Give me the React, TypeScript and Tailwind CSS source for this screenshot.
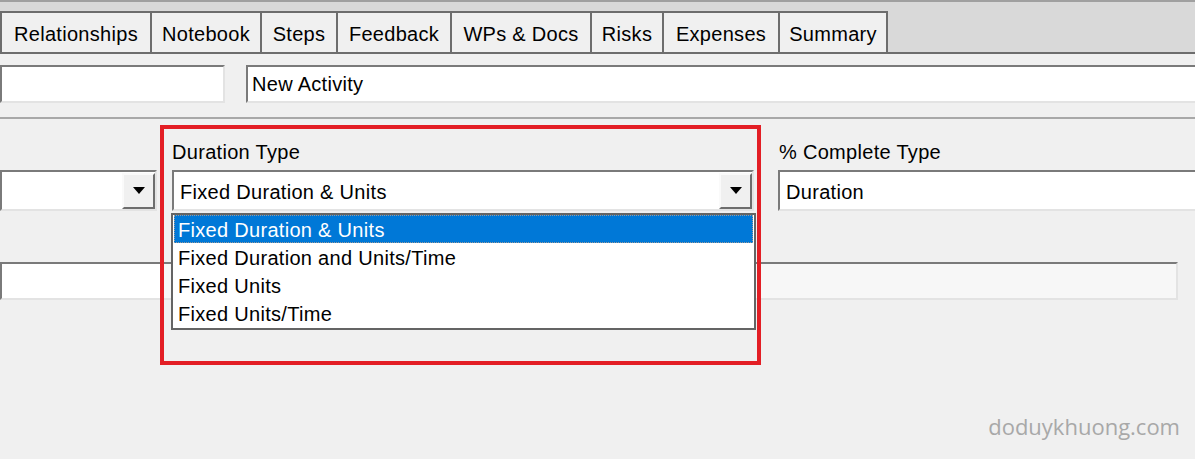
import type { ReactNode } from "react"

const tabs = [
  { label: "Relationships", w: "w-[150px]" },
  { label: "Notebook", w: "w-[110px]" },
  { label: "Steps", w: "w-[76px]" },
  { label: "Feedback", w: "w-[114px]" },
  { label: "WPs & Docs", w: "w-[140px]" },
  { label: "Risks", w: "w-[72px]" },
  { label: "Expenses", w: "w-[116px]" },
  { label: "Summary", w: "w-[110px] border-r-2" }
]

const options = [
  "Fixed Duration & Units",
  "Fixed Duration and Units/Time",
  "Fixed Units",
  "Fixed Units/Time"
]

// sunken win32 edit look
const sunken =
  "border-2 border-t-[#7a7a7a] border-l-[#7a7a7a] border-b-[#e3e3e3] border-r-[#e3e3e3]"

const Arrow = () => (
  <svg width="12" height="7" viewBox="0 0 12 7">
    <path d="M0 0h12L6 7z" fill="#000" />
  </svg>
)

const Combo = ({ text = "", children = null as ReactNode }) => (
  <div className={`relative flex h-[41px] items-center bg-white ${sunken}`}>
    <span className="flex-1 pl-[6px] pt-[2px] leading-none whitespace-nowrap">{text}</span>
    <div className="flex h-[36px] w-[33px] items-center justify-center border-2 border-t-[#fafafa] border-l-[#fafafa] border-r-[#6d6d6d] border-b-[#6d6d6d] bg-[#f0f0f0]">
      <Arrow />
    </div>
    {children}
  </div>
)

export default function App() {
  return (
    <div className="relative h-[459px] w-[1195px] overflow-hidden bg-[#f0f0f0] font-['Liberation_Sans',Arial,sans-serif] text-[20px] tracking-[0.3px] text-black">
      {/* tab strip */}
      <div className="flex h-[54px] items-end border-t-2 border-b-2 border-t-[#a0a0a0] border-b-[#6d6d6d] bg-[#d9d9d9]">
        {tabs.map((t) => (
          <div
            key={t.label}
            className={`flex h-[41px] items-center justify-center border-t-2 border-l-2 border-[#6d6d6d] bg-[#f0f0f0] pt-[2px] ${t.w}`}>
            {t.label}
          </div>
        ))}
      </div>

      {/* id / name row */}
      <div className="flex h-[65px] border-b-2 border-[#a8a8a8] pt-[11px]">
        <div className={`h-[38px] w-[225px] shrink-0 bg-white ${sunken}`} />
        <div className={`ml-[21px] flex h-[38px] w-[1000px] shrink-0 items-center bg-white pl-[4px] ${sunken}`}>
          New Activity
        </div>
      </div>

      {/* general panel */}
      <div className="pt-[21px]">
        <div className="flex">
          <div className="w-[157px] shrink-0">
            <div className="h-[24px]" />
            <div className="mt-[6px]">
              <Combo />
            </div>
          </div>

          <div className="ml-[15px] w-[582px] shrink-0">
            <div className="h-[24px] leading-[24px]">Duration Type</div>
            <div className="mt-[6px]">
              <Combo text="Fixed Duration & Units">
                <div className="absolute left-[-3px] top-[41px] z-10 h-[117px] w-[585px] border-2 border-[#646464] bg-white">
                  {options.map((o, i) => (
                    <div
                      key={o}
                      className={
                        i === 0
                          ? "mx-[1px] flex h-[28px] items-center border border-dotted border-[#9a9a9a] bg-[#0078d7] pl-[3px] pt-[2px] text-white"
                          : "mx-[1px] flex h-[28px] items-center pl-[4px] pt-[2px]"
                      }>
                      {o}
                    </div>
                  ))}
                </div>
              </Combo>
            </div>
          </div>

          <div className="ml-[24px] w-[500px] shrink-0">
            <div className="h-[24px] leading-[24px] pl-[1px]">% Complete Type</div>
            <div className={`mt-[6px] flex h-[41px] items-center bg-white pl-[6px] pt-[2px] ${sunken}`}>
              Duration
            </div>
          </div>
        </div>

        <div className={`mt-[51px] flex h-[38px] w-[1178px] bg-[#f7f7f7] ${sunken}`}>
          <div className="w-[158px] bg-white" />
        </div>
      </div>

      {/* annotation */}
      <div className="absolute left-[160px] top-[125px] z-20 h-[240px] w-[601px] border-4 border-[#e31e25]" />

      <div className="absolute right-[15px] top-[410px] font-['Open_Sans',sans-serif] text-[22px] tracking-normal text-[#a8a8a8]">
        doduykhuong.com
      </div>
    </div>
  )
}
